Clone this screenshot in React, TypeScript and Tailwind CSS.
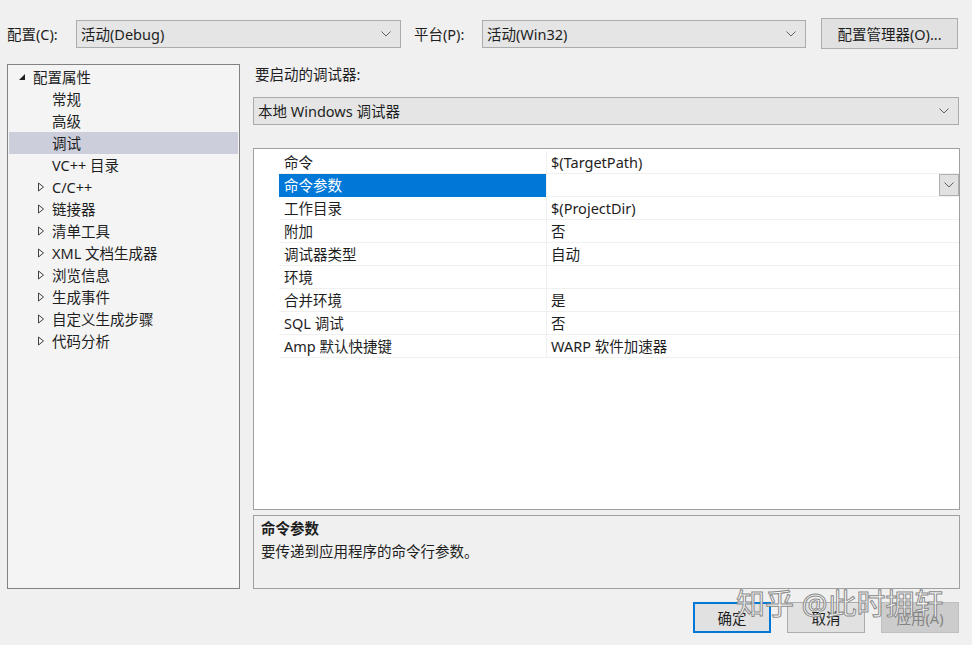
import React from "react";

const font = { fontFamily: '"Noto Sans", "Noto Sans CJK SC", sans-serif' };

function Chevron({ className = "" }: { className?: string }) {
  return (
    <svg width="10" height="6" viewBox="0 0 10 6" className={className}>
      <path d="M0.5 0.5 L5 5 L9.5 0.5" fill="none" stroke="#606060" strokeWidth="1" />
    </svg>
  );
}

function Combo({ text, className = "" }: { text: string; className?: string }) {
  return (
    <div className={"flex items-center h-[28px] bg-[#e5e5e5] border border-[#acacac] pl-[4px] pr-[9px] " + className}>
      <span className="flex-1 text-[#1e1e1e]">{text}</span>
      <Chevron />
    </div>
  );
}

function Expanded() {
  return (
    <svg width="8" height="8" viewBox="0 0 8 8">
      <path d="M7 1 L7 7 L1 7 Z" fill="#1e1e1e" />
    </svg>
  );
}

function Collapsed() {
  return (
    <svg width="8" height="10" viewBox="0 0 8 10">
      <path d="M1.5 1 L6.5 5 L1.5 9 Z" fill="none" stroke="#404040" strokeWidth="1" />
    </svg>
  );
}

const tree: { label: string; level: number; kind: "exp" | "col" | "leaf"; sel?: boolean }[] = [
  { label: "配置属性", level: 0, kind: "exp" },
  { label: "常规", level: 1, kind: "leaf" },
  { label: "高级", level: 1, kind: "leaf" },
  { label: "调试", level: 1, kind: "leaf", sel: true },
  { label: "VC++ 目录", level: 1, kind: "leaf" },
  { label: "C/C++", level: 1, kind: "col" },
  { label: "链接器", level: 1, kind: "col" },
  { label: "清单工具", level: 1, kind: "col" },
  { label: "XML 文档生成器", level: 1, kind: "col" },
  { label: "浏览信息", level: 1, kind: "col" },
  { label: "生成事件", level: 1, kind: "col" },
  { label: "自定义生成步骤", level: 1, kind: "col" },
  { label: "代码分析", level: 1, kind: "col" },
];

const props: [string, string][] = [
  ["命令", "$(TargetPath)"],
  ["命令参数", ""],
  ["工作目录", "$(ProjectDir)"],
  ["附加", "否"],
  ["调试器类型", "自动"],
  ["环境", ""],
  ["合并环境", "是"],
  ["SQL 调试", "否"],
  ["Amp 默认快捷键", "WARP 软件加速器"],
];

export default function App() {
  return (
    <div className="relative w-[972px] h-[645px] bg-[#f0f0f0] overflow-hidden text-[14.5px] text-[#1e1e1e] leading-[20px]" style={font}>
      {/* top bar */}
      <div className="flex items-center h-[31px] mt-[18px] pl-[7px]">
        <span className="w-[69px]">配置(C):</span>
        <Combo text="活动(Debug)" className="w-[325px]" />
        <span className="ml-[13px] w-[68px]">平台(P):</span>
        <Combo text="活动(Win32)" className="w-[324px]" />
        <button className="ml-[15px] w-[137px] h-[31px] bg-[#e1e1e1] border border-[#adadad] text-[#1e1e1e]">
          配置管理器(O)...
        </button>
      </div>

      {/* main */}
      <div className="flex mt-[15px] pl-[7px] gap-[13px] h-[525px]">
        {/* tree */}
        <div className="w-[233px] h-full bg-[#f4f4f4] border border-[#828282] pt-[1px] px-[1px]">
          {tree.map((t) => (
            <div
              key={t.label}
              className={"flex items-center h-[22px] " + (t.sel ? "bg-[#cccedb]" : "")}
            >
              {t.level === 0 ? (
                <>
                  <span className="w-[24px] flex justify-end pr-[7px]">
                    <Expanded />
                  </span>
                  <span>{t.label}</span>
                </>
              ) : (
                <>
                  <span className="w-[43px] flex justify-end pr-[7px]">
                    {t.kind === "col" ? <Collapsed /> : null}
                  </span>
                  <span>{t.label}</span>
                </>
              )}
            </div>
          ))}
        </div>

        {/* right column */}
        <div className="w-[707px] flex flex-col">
          <div className="h-[20px] pl-[2px]">要启动的调试器:</div>
          <Combo text="本地 Windows 调试器" className="mt-[13px] w-[706px]" />
          <div className="mt-[23px] h-[362px] bg-white border border-[#a0a0a0] pt-[2px]">
            {props.map(([k, v], i) => {
              const sel = i === 1;
              return (
                <div key={k} className="flex h-[23px] items-stretch">
                  <div className="w-[25px] bg-white" />
                  <div
                    className={
                      "w-[267px] flex items-center pl-[5px] border-b " +
                      (sel ? "bg-[#0078d7] text-white border-[#0078d7]" : "border-[#f0f0f0]")
                    }
                  >
                    {k}
                  </div>
                  <div className="flex-1 flex items-center pl-[4px] border-b border-l border-[#f0f0f0]">
                    <span className="flex-1">{v}</span>
                    {sel ? (
                      <div className="w-[20px] h-[22px] bg-[#e1e1e1] border border-[#b0b0b0] flex items-center justify-center">
                        <Chevron />
                      </div>
                    ) : null}
                  </div>
                </div>
              );
            })}
          </div>
          <div className="mt-[5px] h-[74px] border border-[#a0a0a0] bg-[#f0f0f0] pl-[7px] pt-[1px]">
            <div className="font-bold h-[22px] flex items-center">命令参数</div>
            <div className="h-[23px] flex items-center">要传递到应用程序的命令行参数。</div>
          </div>
        </div>
      </div>

      {/* bottom buttons */}
      <div className="flex justify-end gap-[16px] pr-[13px] mt-[13px]">
        <button className="w-[78px] h-[31px] bg-[#e1e1e1] border-2 border-[#0078d7] text-[#1e1e1e]">确定</button>
        <button className="w-[78px] h-[31px] bg-[#e1e1e1] border border-[#adadad] text-[#1e1e1e]">取消</button>
        <button className="w-[78px] h-[31px] bg-[#cccccc] border border-[#bfbfbf] text-[#838383]">应用(A)</button>
      </div>

      {/* watermark */}
      <div
        className="absolute left-[736px] top-[585px] text-[29px] leading-[38px] text-white/85 [-webkit-text-stroke:1px_#8a8a8a] whitespace-nowrap pointer-events-none"
        style={font}
      >
        知乎 @此时拥轩
      </div>
    </div>
  );
}
